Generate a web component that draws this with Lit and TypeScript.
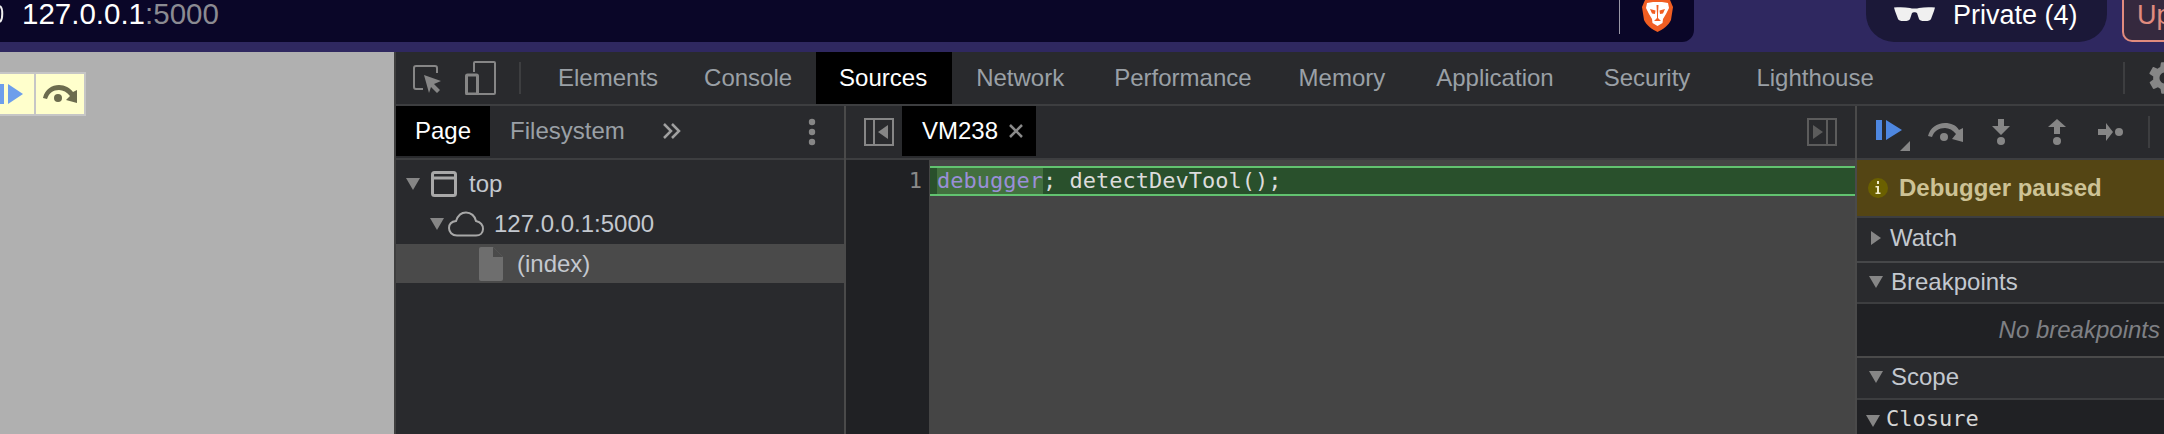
import { LitElement, html, css } from "lit";
import { customElement } from "lit/decorators.js";

const tri = () => html`<svg width="14" height="12" viewBox="0 0 14 12"><path d="M0 0H14L7 12Z" fill="#868686"/></svg>`;

@customElement("app-root")
export class AppRoot extends LitElement {
  static styles = css`
    :host { display: block; width: 2164px; height: 434px; overflow: hidden; background: #292a2d; font-family: "Liberation Sans", Arial, sans-serif; color: #9aa0a6; font-size: 24px; }
    svg { display: block; flex: none; }
    .chrome { height: 52px; background: #2f2860; display: flex; align-items: flex-start; overflow: hidden; }
    .url { width: 1694px; height: 42px; background: #0a0628; border-bottom-right-radius: 12px; display: flex; align-items: flex-start; flex: none; color: #fff; }
    .url-edge { margin-right: 18px; }
    .url-host { font-size: 29.5px; line-height: 27px; }
    .url-host span { color: #8b8b92; }
    .url-end { margin-left: auto; display: flex; align-items: flex-start; height: 42px; padding-right: 21px; gap: 22px; }
    .url-div { width: 1px; height: 34px; background: #9a98a6; }
    .pill { margin-left: 172px; width: 241px; height: 42px; box-sizing: border-box; background: #1b1838; border-radius: 0 0 28px 28px; display: flex; align-items: flex-start; padding: 6px 0 0 28px; gap: 18px; flex: none; color: #fff; font-size: 27px; }
    .pill span { line-height: 18px; white-space: nowrap; }
    .pill svg { margin-top: 1px; }
    .update { margin-left: 15px; width: 80px; height: 42px; flex: none; box-sizing: border-box; border: 2px solid #e08b7e; border-top: 0; border-radius: 0 0 0 10px; border-right: 0; background: #35293e; color: #e08b7e; font-size: 27px; padding-left: 13px; line-height: 30px; white-space: nowrap; overflow: hidden; }
    .main { display: flex; height: 382px; }
    .page { width: 394px; background: #b0b0b0; position: relative; flex: none; }
    .paused-overlay { position: absolute; left: -6px; top: 20px; height: 44px; box-sizing: border-box; border: 2px solid #c6c6c6; display: flex; gap: 2px; background: #c6c6c6; }
    .paused-overlay div { background: #ffffcc; height: 40px; display: flex; align-items: center; justify-content: center; }
    .cell-a { width: 38px; }
    .cell-a svg { margin-right: 12px; }
    .cell-b { width: 48px; }
    .devtools { flex: 1; min-width: 0; border-left: 2px solid #3f3f3f; display: flex; flex-direction: column; }
    .top-bar { height: 52px; flex: none; display: flex; align-items: center; border-bottom: 2px solid #3d3e40; background: #292a2d; }
    .top-bar .ic1 { margin-left: 17px; }
    .top-bar .ic2 { margin-left: 22px; }
    .vdiv { width: 2px; height: 32px; background: #3d3e40; flex: none; }
    .vdiv.first { margin-left: 23px; }
    .tabs { display: flex; height: 52px; margin-left: 14px; }
    .tab { display: flex; align-items: center; padding: 0 23px; white-space: nowrap; }
    .tab.on { background: #000; color: #fff; padding-right: 25px; }
    .tab.t-console { padding: 0 24px 0 23px; }
    .tab.t-network { padding-left: 24px; }
    .tab.t-perf { padding-left: 27px; }
    .tab.t-mem { padding-left: 24px; }
    .tab.t-app { padding-left: 28px; }
    .tab.t-sec { padding-left: 27px; }
    .tab.t-light { padding-left: 26px; margin-left: 17px; }
    .gear-div { margin-left: auto; margin-right: 22px; }
    .gear { margin: 0 -20px 0 -1px; }
    .body { flex: 1; display: flex; min-height: 0; }
    .nav { width: 448px; flex: none; display: flex; flex-direction: column; border-right: 2px solid #4a4a4a; }
    .row2 { height: 54px; flex: none; display: flex; align-items: flex-start; border-bottom: 2px solid #3d3e40; box-sizing: border-box; }
    .row2 .tab { height: 50px; padding: 0 18px; }
    .row2 .tab.on { padding: 0 19px; }
    .row2 .tab.fs { padding-left: 20px; }
    .row2 .more { margin: 16px 0 0 19px; }
    .row2 .dots { margin: 12px 28px 0 auto; }
    .tree { padding-top: 4px; color: #c3c8cf; }
    .t-row { height: 40px; display: flex; align-items: center; }
    .t-row.sel { background: #4a4a4a; height: 39px; }
    .r1 { padding-left: 10px; gap: 12px; }
    .r1 svg + svg { margin-left: -1px; }
    .r2 { padding-left: 34px; gap: 4px; }
    .r2 span { margin-left: 6px; }
    .r3 { padding-left: 83px; gap: 14px; }
    .editor { flex: 1; min-width: 0; display: flex; flex-direction: column; border-right: 2px solid #4a4a4a; }
    .ed-tabs { height: 54px; flex: none; box-sizing: border-box; border-bottom: 2px solid #3d3e40; display: flex; align-items: center; padding-left: 18px; }
    .vm { height: 50px; display: flex; align-items: center; background: #000; color: #fff; margin-left: 8px; padding: 0 13px 0 20px; gap: 11px; align-self: flex-start; }
    .collapse { margin-left: auto; margin-right: 18px; }
    .code { flex: 1; display: flex; min-height: 0; background: #454545; }
    .gutter { width: 83px; flex: none; background: #202124; color: #8a8a8a; font: 22px/30px "DejaVu Sans Mono", monospace; text-align: right; box-sizing: border-box; padding: 6px 7px 0 0; }
    .lines { flex: 1; min-width: 0; padding: 6px 0 0 1px; }
    .line { height: 30px; box-sizing: border-box; border-top: 2px solid #62c370; border-bottom: 2px solid #62c370; background: #29502c; padding-left: 7px; color: #dcdcdc; font: 22px/26px "DejaVu Sans Mono", monospace; white-space: pre; }
    .kw { color: #9a8fd8; background: #43703f; display: inline-block; height: 26px; }
    .side { width: 307px; flex: none; display: flex; flex-direction: column; color: #c3c8cf; }
    .dbg { height: 54px; flex: none; box-sizing: border-box; border-bottom: 2px solid #3d3e40; display: flex; align-items: center; padding-left: 19px; }
    .dbg .s0 { margin-top: 8px; }
    .dbg .s1 { margin-left: 18px; }
    .dbg .s2 { margin-left: 28px; }
    .dbg .s3 { margin-left: 38px; }
    .dbg .s4 { margin-left: 32px; }
    .dbg .vdiv { margin-left: 24px; }
    .banner { height: 56px; flex: none; background: #544514; display: flex; align-items: center; padding-left: 11px; gap: 11px; color: #cdc295; font-weight: bold; white-space: nowrap; box-sizing: border-box; }
    .sec { flex: none; box-sizing: border-box; border-bottom: 2px solid #464749; display: flex; align-items: center; white-space: nowrap; }
    .sec svg { margin-right: 8px; }
    .watch { height: 47px; border-top: 2px solid #3d3e40; padding: 0 0 4px 14px; }
    .watch svg { margin-right: 9px; }
    .bp { height: 41px; padding: 0 0 2px 12px; border-bottom-color: #3d3e40; }
    .empty { height: 54px; flex: none; box-sizing: border-box; background: #202124; border-bottom: 2px solid #4a4a4a; color: #7f8084; font-style: italic; display: flex; align-items: center; justify-content: flex-end; padding-right: 4px; }
    .scope { height: 42px; padding: 0 0 2px 12px; border-bottom-color: #3d3e40; }
    .closure { flex: 1; background: #202124; color: #d6d6d6; font: 22px/30px "DejaVu Sans Mono", monospace; display: flex; padding: 4px 0 0 9px; gap: 6px; }
    .closure svg { margin-top: 11px; }
  `;

  render() {
    return html`
      <div class="chrome">
        <div class="url">
          <svg class="url-edge" width="4" height="28" viewBox="0 0 4 28"><path d="M0 6C3 8 3 19 0 22" fill="none" stroke="#eee" stroke-width="2"/></svg>
          <div class="url-host">127.0.0.1<span>:5000</span></div>
          <div class="url-end">
            <div class="url-div"></div>
            <svg width="31" height="32" viewBox="0 0 31 32">
              <path d="M3 0H28L31 7L29 20C27 25 20 30 15.500 32C11 30 4 25 2 20L0 7Z" fill="#f15e22"/>
              <path d="M5 3L11 2H20L26 3L27 8L24 14L21 19L20.500 23L15.500 26L10.500 23L10 19L7 14L4 8Z" fill="#fff"/>
              <path d="M8 9L13.500 10.500L13 14L10 13.500ZM23 9L17.500 10.500L18 14L21 13.500ZM14.500 5H16.500L16 14V18L19 21H12L15 18V14Z" fill="#f15e22"/>
            </svg>
          </div>
        </div>
        <div class="pill">
          <svg width="41" height="14" viewBox="0 0 41 14"><path d="M0 0.500C5 0 11 0 16 1C18 1.700 23 1.700 25 1C30 0 36 0 41 0.500L40 4L37 12C36 13.500 35 14 31 14C27 14 26 13.500 25 12L23 6C22 5 19 5 18 6L16 12C15 13.500 14 14 10 14C6 14 5 13.500 4 12L1 4Z" fill="#f0f0f0"/></svg>
          <span>Private (4)</span>
        </div>
        <div class="update">Update</div>
      </div>
      <div class="main">
        <div class="page">
          <div class="paused-overlay">
            <div class="cell-a"><svg width="30" height="22" viewBox="0 0 30 22"><path d="M0 1H10V21H0Z" fill="#6d9eeb"/><path d="M14 1L29 11L14 21Z" fill="#6d9eeb"/></svg></div>
            <div class="cell-b"><svg width="36" height="22" viewBox="0 0 36 22"><path d="M1 15C3 6 10 2 17 2C23 2 28 5 31 9L35 7L35 20L24 17L28 13C25 9 21 7 17 7C11 7 7 10 5 16Z" fill="#6c6c4e"/><circle cx="16" cy="15" r="4" fill="#6c6c4e"/></svg></div>
          </div>
        </div>
        <div class="devtools">
          <div class="top-bar">
            <svg class="ic1" width="30" height="30" viewBox="0 0 30 30"><path d="M10 26H3Q1 26 1 24V5Q1 3 3 3H22Q24 3 24 5V10" fill="none" stroke="#868686" stroke-width="2"/><path d="M11 12L28 18L21 21L27 27L24 30L18 24L16 30Z" fill="#868686"/></svg>
            <svg class="ic2" width="31" height="34" viewBox="0 0 31 34"><path d="M9 11V2Q9 1 10 1H29Q30 1 30 2V32Q30 33 29 33H12" fill="none" stroke="#868686" stroke-width="2"/><rect x="1.500" y="14" width="11" height="19" rx="1" fill="none" stroke="#868686" stroke-width="3"/></svg>
            <div class="vdiv first"></div>
            <div class="tabs">
              <div class="tab">Elements</div>
              <div class="tab t-console">Console</div>
              <div class="tab on">Sources</div>
              <div class="tab t-network">Network</div>
              <div class="tab t-perf">Performance</div>
              <div class="tab t-mem">Memory</div>
              <div class="tab t-app">Application</div>
              <div class="tab t-sec">Security</div>
              <div class="tab t-light">Lighthouse</div>
            </div>
            <div class="vdiv gear-div"></div>
            <svg class="gear" width="38" height="38" viewBox="0 0 24 24"><path fill="#868686" d="M19.400 13c0-.3.1-.6.1-1s0-.7-.1-1l2.100-1.600c.2-.2.2-.4.1-.6l-2-3.500c-.1-.2-.4-.3-.6-.2l-2.500 1c-.5-.4-1.100-.7-1.700-1l-.4-2.600c0-.2-.2-.4-.5-.4h-4c-.2 0-.5.2-.5.4l-.4 2.600c-.6.3-1.200.6-1.700 1l-2.500-1c-.2-.1-.5 0-.6.2l-2 3.500c-.1.2-.1.4.1.6L4.600 11c0 .3-.1.6-.1 1s0 .7.1 1l-2.100 1.600c-.2.200-.2.400-.1.600l2 3.500c.1.200.4.300.6.200l2.500-1c.5.400 1.100.7 1.700 1l.4 2.600c0 .2.3.400.5.400h4c.3 0 .5-.2.5-.4l.4-2.600c.6-.3 1.200-.6 1.700-1l2.500 1c.2.100.5 0 .6-.2l2-3.500c.1-.2.1-.4-.1-.6ZM12 15.500a3.500 3.500 0 1 1 0-7 3.500 3.500 0 0 1 0 7Z"/></svg>
          </div>
          <div class="body">
            <div class="nav">
              <div class="row2">
                <div class="tab on">Page</div>
                <div class="tab fs">Filesystem</div>
                <svg class="more" width="20" height="18" viewBox="0 0 20 18"><path d="M2 2L9 9L2 16M10 2L17 9L10 16" fill="none" stroke="#a0a0a0" stroke-width="2.500"/></svg>
                <svg class="dots" width="8" height="28" viewBox="0 0 8 28"><circle cx="4" cy="4" r="3.200" fill="#868686"/><circle cx="4" cy="14" r="3.200" fill="#868686"/><circle cx="4" cy="24" r="3.200" fill="#868686"/></svg>
              </div>
              <div class="tree">
                <div class="t-row r1">
                  ${tri()}
                  <svg width="26" height="26" viewBox="0 0 26 26"><rect x="1.500" y="1.500" width="23" height="23" rx="2" fill="none" stroke="#a8a8a8" stroke-width="3"/><path d="M1 7H25" stroke="#a8a8a8" stroke-width="3"/></svg>
                  <span>top</span>
                </div>
                <div class="t-row r2">
                  ${tri()}
                  <svg width="36" height="26" viewBox="0 0 36 26"><path d="M9 24.500C4 24.500 1 21 1 17C1 13 4 10.500 8 10C10 4 14 1.500 18 1.500C23 1.500 27 5 28 10C32 11 35 14 35 18C35 22 32 24.500 28 24.500Z" fill="none" stroke="#a8a8a8" stroke-width="2"/></svg>
                  <span>127.0.0.1:5000</span>
                </div>
                <div class="t-row r3 sel">
                  <svg width="24" height="34" viewBox="0 0 24 34"><path d="M2 0H14L24 10V32Q24 34 22 34H2Q0 34 0 32V2Q0 0 2 0Z" fill="#6e6e6e"/><path d="M14 0V10H24Z" fill="#4a4a4a"/></svg>
                  <span>(index)</span>
                </div>
              </div>
            </div>
            <div class="editor">
              <div class="ed-tabs">
                <svg width="30" height="28" viewBox="0 0 30 28"><rect x="1" y="1" width="28" height="26" fill="none" stroke="#868686" stroke-width="2"/><path d="M10 1V27" stroke="#868686" stroke-width="2"/><path d="M24 7V21L14 14Z" fill="#868686"/></svg>
                <div class="vm"><span>VM238</span>
                  <svg width="14" height="14" viewBox="0 0 14 14"><path d="M1 1L13 13M13 1L1 13" stroke="#8a8a8a" stroke-width="2.500"/></svg></div>
                <svg class="collapse" width="30" height="28" viewBox="0 0 30 28"><rect x="1" y="1" width="28" height="26" fill="none" stroke="#5c5c5c" stroke-width="2"/><path d="M20 1V27" stroke="#5c5c5c" stroke-width="2"/><path d="M6 7V21L16 14Z" fill="#5c5c5c"/></svg>
              </div>
              <div class="code">
                <div class="gutter">1</div>
                <div class="lines">
                  <div class="line"><span class="kw">debugger</span>; detectDevTool();</div>
                </div>
              </div>
            </div>
            <div class="side">
              <div class="dbg">
                <svg class="s0" width="34" height="32" viewBox="0 0 34 32"><path d="M0 0H6V20H0ZM10 0L26 10L10 20Z" fill="#4e87e0"/><path d="M34 21V31H24Z" fill="#868686"/></svg>
                <svg class="s1" width="36" height="20" viewBox="0 0 36 20"><path d="M0 14C2 6 9 1 17 1C23 1 28 3 31 8L35 6L35 20L24 17L28 12C25 8 21 6 17 6C11 6 6 9 4 15Z" fill="#868686"/><circle cx="16" cy="15" r="4" fill="#868686"/></svg>
                <svg class="s2" width="18" height="26" viewBox="0 0 18 26"><path d="M6 0H12V7H18L9 16L0 7H6Z" fill="#868686"/><circle cx="9" cy="22" r="4" fill="#868686"/></svg>
                <svg class="s3" width="18" height="26" viewBox="0 0 18 26"><path d="M6 15H12V8H18L9 0L0 8H6Z" fill="#868686"/><circle cx="9" cy="22" r="4" fill="#868686"/></svg>
                <svg class="s4" width="26" height="18" viewBox="0 0 26 18"><path d="M0 6H8V0L15 9L8 18V12H0Z" fill="#868686"/><circle cx="21" cy="9" r="4" fill="#868686"/></svg>
                <div class="vdiv"></div>
              </div>
              <div class="banner">
                <svg width="20" height="20" viewBox="0 0 20 20"><circle cx="10" cy="10" r="10" fill="#6b6000"/><path d="M9 3H11V6H9ZM7.500 8H11V14.500H12.500V16H7.500V14.500H9V9.500H7.500Z" fill="#f0ecc8"/></svg>
                <span>Debugger paused</span>
              </div>
              <div class="sec watch"><svg width="10" height="14" viewBox="0 0 10 14"><path d="M0 0L10 7L0 14Z" fill="#868686"/></svg>Watch</div>
              <div class="sec bp">${tri()}Breakpoints</div>
              <div class="empty">No breakpoints</div>
              <div class="sec scope">${tri()}Scope</div>
              <div class="closure">${tri()}<span>Closure</span></div>
            </div>
          </div>
        </div>
      </div>
    `;
  }
}
